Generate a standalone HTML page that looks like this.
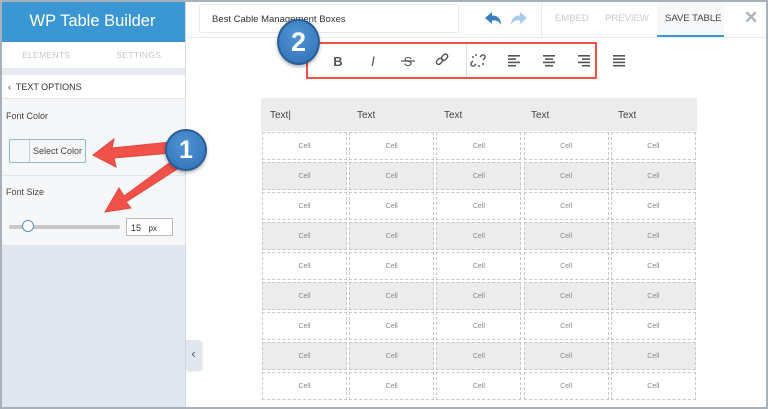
<!DOCTYPE html>
<html><head><style>
*{margin:0;padding:0;box-sizing:border-box}
body{width:768px;height:409px;overflow:hidden;font-family:"Liberation Sans",sans-serif;background:#fff;position:relative}
.frame{position:absolute;inset:0;border:2px solid #a9b0b8;pointer-events:none;z-index:50}
.side{position:absolute;left:0;top:0;width:186px;height:409px;background:#e1e7ef;border-right:1px solid #d5dbe2}
.hdr{height:42px;background:#3a97d3;color:#fff;font-size:16.5px;text-align:center;line-height:42px}
.tabs{height:26px;background:#fff;display:flex;font-size:8.5px;color:#c3c8ce;letter-spacing:.3px}
.tabs div{flex:1;text-align:center;line-height:26px}
.gap{height:7px;background:#e8ecf0}
.opt{height:24px;background:#fff;font-size:9px;color:#333;line-height:24px;padding-left:8px;border-bottom:1px solid #e3e6e9}
.sec{background:#f6f7f9;border-bottom:1px solid #e3e6e9;position:relative}
.lbl{font-size:9px;color:#444;position:absolute;left:6px}
.top{position:absolute;left:187px;top:0;right:0;height:38px;border-bottom:1px solid #e8ebee;background:#fff}
.t{position:absolute;font-size:9.5px;color:#c5ccd3}
.thr{position:absolute;left:261px;top:98px;width:436px;height:33px;background:#ececec}
.thr span{position:absolute;top:12px;font-size:10px;color:#444}
.c{position:absolute;width:85px;height:28px;border:1px dashed #c9c9c9;background:#fff;font-size:7px;color:#888;text-align:center;line-height:27px}
.c.g{background:#ececec}
.circ{position:absolute;border-radius:50%;background:radial-gradient(circle at 45% 35%,#4f95d6,#2f6fb3);border:2px solid #2a5d98;color:#fff;font-weight:bold;text-align:center;box-shadow:0 2px 3px rgba(0,0,0,.3)}
</style></head><body>
<div class="side">
 <div class="hdr">WP Table Builder</div>
 <div class="tabs"><div>ELEMENTS</div><div>SETTINGS</div></div>
 <div class="gap"></div>
 <div class="opt">&lsaquo;&nbsp; TEXT OPTIONS</div>
 <div class="sec" style="height:77px">
  <div class="lbl" style="top:12px">Font Color</div>
  <div style="position:absolute;left:9px;top:40px;width:77px;height:24px;border:1px solid #8bb9dc;border-radius:2px;background:#f4f6f8">
   <div style="position:absolute;left:19px;top:0;bottom:0;border-left:1px solid #ccd;"></div>
   <div style="position:absolute;left:23px;top:6px;font-size:9px;color:#444">Select Color</div>
  </div>
 </div>
 <div class="sec" style="height:70px">
  <div class="lbl" style="top:11px">Font Size</div>
  <div style="position:absolute;left:9px;top:49px;width:111px;height:4px;border-radius:2px;background:#c7c7c7"></div>
  <div style="position:absolute;left:22px;top:44px;width:12px;height:12px;border-radius:50%;background:#fff;border:1px solid #5a8fc0"></div>
  <div style="position:absolute;left:126px;top:42px;width:47px;height:18px;border:1px solid #bbb;background:#fff;font-size:9px;color:#333;padding:4px 0 0 4px">15 &nbsp; <span style="font-size:8px">px</span></div>
 </div>
</div>
<div style="position:absolute;left:186px;top:340px;width:15px;height:30px;background:#e1e7ef;border-radius:0 3px 3px 0;box-shadow:1px 1px 2px rgba(0,0,0,.15);color:#556;font-size:13px;text-align:center;line-height:28px">&lsaquo;</div>
<div class="top">
 <div style="position:absolute;left:12px;top:4px;width:260px;height:29px;border:1px solid #e6e9ec;border-radius:3px;font-size:9.5px;color:#333;padding:9px 0 0 12px">Best Cable Management Boxes</div>
 <svg style="position:absolute;left:297px;top:11px" width="44" height="16" viewBox="0 0 44 16"><path d="M1 7 L8 1 L8 4.5 C14 4.5 17 8 17 14 C15 10 12 9 8 9.5 L8 13 Z" fill="#3a7fc4"/><path d="M43 7 L36 1 L36 4.5 C30 4.5 27 8 27 14 C29 10 32 9 36 9.5 L36 13 Z" fill="#a8cbe9"/></svg>
 <div style="position:absolute;left:354px;top:0;height:38px;border-left:1px solid #e8ebee"></div>
 <div class="t" style="left:368px;top:13px">EMBED</div>
 <div class="t" style="left:418px;top:13px">PREVIEW</div>
 <div style="position:absolute;left:470px;top:0;width:67px;height:37px;background:#f7f8fa;border-bottom:2px solid #3a97d3"></div>
 <div class="t" style="left:478px;top:13px;color:#444">SAVE TABLE</div>
 <div class="t" style="left:557px;top:8px;font-size:17px;color:#aab2ba;font-weight:bold">✕</div>
</div>
<div style="position:absolute;left:306px;top:42px;width:291px;height:37px;border:2px solid #f0524a"></div>
<div style="position:absolute;left:466px;top:44px;height:33px;border-left:1px solid #ddd"></div>
<svg style="position:absolute;left:0;top:0" width="768" height="409">
<text x="338" y="66" text-anchor="middle" font-family="Liberation Sans" font-weight="bold" font-size="13" fill="#555">B</text>
<text x="373" y="66" text-anchor="middle" font-family="Liberation Sans" font-style="italic" font-size="14" fill="#555">I</text>
<text x="408" y="66" text-anchor="middle" font-family="Liberation Sans" font-size="13" fill="#555">S</text>
<line x1="401" y1="61" x2="415" y2="61" stroke="#555" stroke-width="1.2"/>
<g stroke="#555" stroke-width="1.4" fill="none">
<rect x="436" y="59" width="7" height="4.5" rx="2.2" transform="rotate(-45 439.5 61.2)"/>
<rect x="441" y="55" width="7" height="4.5" rx="2.2" transform="rotate(-45 444.5 57.2)"/>
<path d="M473 61 L471.5 62.5 A2 2 0 0 0 474.5 65.5 L476 64 M480 57 L481.5 55.5 A2 2 0 0 1 484.5 58.5 L483 60"/>
<path d="M472 57 H474 M482 64 H484 M476 54 V56 M479 65 V67"/>
</g>
<g fill="#555">
<rect x="508" y="55" width="12" height="1.6"/><rect x="508" y="58.3" width="8" height="1.6"/><rect x="508" y="61.6" width="12" height="1.6"/><rect x="508" y="64.9" width="8" height="1.6"/>
<rect x="543" y="55" width="12" height="1.6"/><rect x="545" y="58.3" width="8" height="1.6"/><rect x="543" y="61.6" width="12" height="1.6"/><rect x="545" y="64.9" width="8" height="1.6"/>
<rect x="578" y="55" width="12" height="1.6"/><rect x="582" y="58.3" width="8" height="1.6"/><rect x="578" y="61.6" width="12" height="1.6"/><rect x="582" y="64.9" width="8" height="1.6"/>
<rect x="613" y="55" width="12" height="1.6"/><rect x="613" y="58.3" width="12" height="1.6"/><rect x="613" y="61.6" width="12" height="1.6"/><rect x="613" y="64.9" width="12" height="1.6"/></g>
</svg>
<div class="thr"><span style="left:9px">Text|</span><span style="left:96px">Text</span><span style="left:183px">Text</span><span style="left:270px">Text</span><span style="left:357px">Text</span></div>
<div id="cells"></div>
<script>
var h='';for(var r=0;r<9;r++)for(var c=0;c<5;c++){h+='<div class="c'+(r%2?' g':'')+'" style="left:'+(262+c*87.2)+'px;top:'+(132+r*30)+'px">Cell</div>';}
document.getElementById('cells').innerHTML=h;
</script>
<svg style="position:absolute;left:0;top:0" width="768" height="409"><g fill="#f0524a" stroke="#e04a42" stroke-width="1">
<path d="M170 142 L112 148 L114 139 L93 155 L116 167 L114 158 L172 153 Z"/>
<path d="M176 158 L124 196 L119 188 L105 212 L131 208 L126 202 L182 166 Z"/></g></svg>
<div class="circ" style="left:165px;top:129px;width:42px;height:42px;font-size:25px;line-height:38px">1</div>
<div class="circ" style="left:277px;top:19px;width:43px;height:46px;font-size:27px;line-height:42px">2</div>
<div class="frame"></div>
</body></html>
